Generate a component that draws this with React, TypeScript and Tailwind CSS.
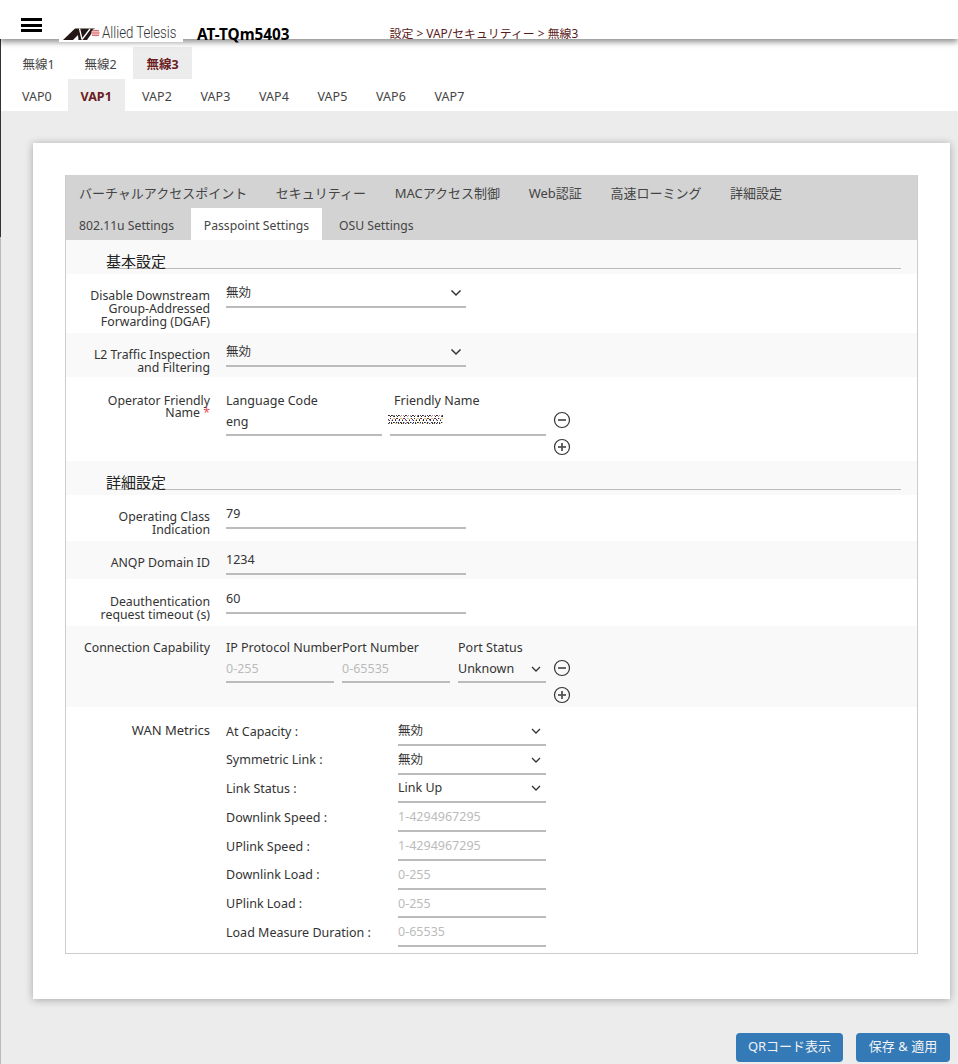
import { ReactNode } from "react";

const font = "font-['Noto_Sans','Noto_Sans_CJK_JP',sans-serif]";

const mainTabs = ["バーチャルアクセスポイント", "セキュリティー", "MACアクセス制御", "Web認証", "高速ローミング", "詳細設定"];

const wanRows = [
  { label: "At Capacity :", value: "無効", select: true },
  { label: "Symmetric Link :", value: "無効", select: true },
  { label: "Link Status :", value: "Link Up", select: true },
  { label: "Downlink Speed :", hint: "1-4294967295" },
  { label: "UPlink Speed :", hint: "1-4294967295" },
  { label: "Downlink Load :", hint: "0-255" },
  { label: "UPlink Load :", hint: "0-255" },
  { label: "Load Measure Duration :", hint: "0-65535" },
];

// pixel noise standing in for the masked name
const noiseColors = ["#222222", "#7a2b4a", "#e2c76a", "#8cc8ee", "#555555", "#3b3b7a", "#c98a8a", "#222222"];
const noise = Array.from({ length: 220 }, (_, i) => ({
  x: (i * 23) % 55,
  y: 4 + ((i * i * 3 + i * 11) % 13),
  c: noiseColors[(i * 13 + (i % 7)) % noiseColors.length],
}));

function Chevron({ small }: { small?: boolean }) {
  return (
    <svg width="12" height="8" viewBox="0 0 12 8" fill="none" className="mr-[4px] shrink-0">
      <path
        d={small ? "M2 2l4 4 4-4" : "M1.5 1.5L6 6l4.5-4.5"}
        stroke="#333333"
        strokeWidth={small ? 1.3 : 1.5}
      />
    </svg>
  );
}

function Field({ value, hint, select, small, className }: { value?: string; hint?: string; select?: boolean; small?: boolean; className: string }) {
  return (
    <div className={`flex h-[28px] shrink-0 items-center justify-between border-b-2 border-[#bbbbbb] ${className}`}>
      {hint ? <span className="pt-[2px] text-[#bbbbbb]">{hint}</span> : <span className="text-[#333333]">{value}</span>}
      {select && <Chevron small={small} />}
    </div>
  );
}

function RoundIcon({ plus }: { plus?: boolean }) {
  return (
    <svg width="18" height="18" viewBox="0 0 18 18" fill="none">
      <circle cx="9" cy="9" r="7.5" stroke="#333333" strokeWidth="1.2" />
      <path d="M5 9h8" stroke="#555555" strokeWidth="1.8" />
      {plus && <path d="M9 5v8" stroke="#555555" strokeWidth="1.8" />}
    </svg>
  );
}

function AddRemove() {
  return (
    <div className="ml-[7px] flex flex-col gap-[9px]">
      <RoundIcon />
      <RoundIcon plus />
    </div>
  );
}

function Row({ label, labelClass, shade, height, children }: { label: ReactNode; labelClass?: string; shade?: boolean; height: string; children: ReactNode }) {
  return (
    <div className={`flex ${height} ${shade ? "bg-[#f9f9f9]" : "bg-white"}`}>
      <div className={`w-[144px] shrink-0 text-right text-[12.3px] text-[#333333] ${labelClass ?? "pt-[15px] leading-[13px]"}`}>{label}</div>
      <div className="ml-[16px] flex min-w-0 flex-1 items-start pt-[6px]">{children}</div>
    </div>
  );
}

function Section({ title }: { title: string }) {
  return (
    <div className="h-[34px] bg-[#f9f9f9] pt-[13px] pr-[16px] pl-[41px]">
      <div className="h-[16px] border-b border-[#bbbbbb] text-[15px] leading-[16px] text-[#222222]">
        <span className="-ml-px">{title}</span>
      </div>
    </div>
  );
}

function Logo() {
  return (
    <div className="-mb-[3px] ml-[17px] flex h-[17px] w-[124px] items-start gap-[2px] bg-white pl-[4px]">
      <svg width="37" height="12" viewBox="0 0 37 12" className="mt-[3px] shrink-0">
        <path d="M0 12L12 0.5h20L24 12H0z" fill="#231815" />
        <path d="M10 12l5-5 .5 5H10z" fill="#ffffff" />
        <path d="M16.5 0.5L19 11.5M19 11.5L27 1" stroke="#ffffff" strokeWidth="1.3" fill="none" />
        <circle cx="32.5" cy="5" r="4.2" fill="#f3f3f3" />
        <path d="M29 2.8h7M28.5 5h8M29 7.2h7" stroke="#d6383f" strokeWidth="1" />
      </svg>
      <span className="origin-left scale-x-[0.8] font-['Roboto',sans-serif] text-[16.5px] leading-[16px] font-light whitespace-nowrap text-[#333333]">
        Allied Telesis
      </span>
    </div>
  );
}

export default function App() {
  return (
    <div className={`relative h-[1064px] w-[958px] overflow-hidden bg-[#ececec] text-[12.5px] ${font}`}>
      <div className="absolute top-0 left-0 h-[237px] w-px bg-[#333333]" />
      <div className="absolute top-[237px] left-0 h-[827px] w-px bg-[#bbbbbb]" />

      <header className="relative z-10 flex h-[39px] items-end bg-white shadow-[0_3px_6px_rgba(0,0,0,0.45)]">
        <div className="mb-[7px] ml-[21px] flex w-[21px] flex-col gap-[2.5px]">
          <div className="h-[3px] bg-black" />
          <div className="h-[3px] bg-black" />
          <div className="h-[3px] bg-black" />
        </div>
        <Logo />
        <div className="ml-[14px] -mb-[5px] text-[15.3px] leading-[20px] font-bold text-black">AT-TQm5403</div>
        <div className="ml-[100px] -mb-px text-[11.9px] leading-[14px] text-[#5a1a20]">設定 &gt; VAP/セキュリティー &gt; 無線3</div>
      </header>

      <div className="bg-white pt-[8px]">
        <div className="ml-[9px] flex h-[32px] gap-[3px]">
          {["無線1", "無線2", "無線3"].map((t, i) => (
            <div key={t} className={`flex w-[59px] items-center justify-center pt-[4px] ${i === 2 ? "bg-[#ececec] font-bold text-[#6b1c23]" : "text-[#444444]"}`}>
              {t}
            </div>
          ))}
        </div>
        <div className="flex h-[32px] items-stretch">
          <div className="flex items-center pt-[4px] pr-[16px] pl-[22px] text-[#444444]">VAP0</div>
          <div className="flex w-[57px] items-center justify-center bg-[#ececec] pt-[4px] font-bold text-[#6b1c23]">VAP1</div>
          <div className="ml-[3px] flex">
            {["VAP2", "VAP3", "VAP4", "VAP5", "VAP6", "VAP7"].map((t) => (
              <div key={t} className="flex w-[58.5px] items-center justify-center pt-[4px] text-[#444444]">
                {t}
              </div>
            ))}
          </div>
        </div>
      </div>

      <div className="mt-[32px] mr-[8px] ml-[33px] bg-white px-[32px] pt-[32px] pb-[45px] shadow-[0_1px_8px_rgba(0,0,0,0.3)]">
        <div className="border-r border-b border-l border-[#cccccc]">
          <div className="bg-[#d3d3d3] text-[13px] text-[#444444]">
            <div className="flex h-[33px]">
              {mainTabs.map((t) => (
                <div key={t} className="flex items-center px-[13px] pt-[4px] not-first:ml-[2.6px]">
                  {t}
                </div>
              ))}
            </div>
            <div className="ml-px flex h-[32px] text-[12.2px]">
              <div className="flex w-[124px] items-center pt-[4px] pl-[12px]">802.11u Settings</div>
              <div className="flex w-[131px] items-center justify-center bg-white pt-[4px]">Passpoint Settings</div>
              <div className="flex items-center pt-[4px] pl-[17px]">OSU Settings</div>
            </div>
          </div>

          <Section title="基本設定" />
          <Row height="h-[59px]" label={<>Disable Downstream<br />Group-Addressed<br />Forwarding (DGAF)</>}>
            <Field value="無効" select className="w-[240px]" />
          </Row>
          <Row height="h-[44px]" shade label={<>L2 Traffic Inspection<br />and Filtering</>}>
            <Field value="無効" select className="w-[240px]" />
          </Row>
          <Row
            height="h-[84px]"
            labelClass="pt-[18px] leading-[12px]"
            label={
              <>
                Operator Friendly
                <br />
                Name <span className="text-[#e8505b]">*</span>
              </>
            }
          >
            <div className="-mt-[6px] flex pt-[16px]">
              <div className="w-[156px]">
                <div className="h-[15px] leading-[15px] text-[#333333]">Language Code</div>
                <Field value="eng" className="w-full pt-[2px]" />
              </div>
              <div className="ml-[8px] w-[156px]">
                <div className="h-[15px] pl-[4px] leading-[15px] text-[#333333]">Friendly Name</div>
                <div className="relative">
                  <Field className="w-full" />
                  <svg width="56" height="20" viewBox="0 0 56 20" className="absolute top-[3px] -left-[2px]">
                    {noise.map((d, i) => (
                      <rect key={i} x={d.x} y={d.y} width="1" height="1" fill={d.c} />
                    ))}
                  </svg>
                </div>
              </div>
            </div>
            <div className="mt-[28px]">
              <AddRemove />
            </div>
          </Row>

          <Section title="詳細設定" />
          <Row height="h-[46px]" label={<>Operating Class<br />Indication</>}>
            <Field value="79" className="w-[240px]" />
          </Row>
          <Row height="h-[38px]" shade label="ANQP Domain ID">
            <Field value="1234" className="w-[240px]" />
          </Row>
          <Row height="h-[47px] pt-px" label={<>Deauthentication<br />request timeout (s)</>}>
            <Field value="60" className="w-[240px]" />
          </Row>
          <Row height="h-[81px]" shade label="Connection Capability">
            <div className="-mt-[6px] flex pt-[14px] whitespace-nowrap">
              <div className="w-[108px]">
                <div className="h-[15px] leading-[15px] text-[#333333]">IP Protocol Number</div>
                <Field hint="0-255" className="w-full" />
              </div>
              <div className="ml-[8px] w-[108px]">
                <div className="h-[15px] leading-[15px] text-[#333333]">Port Number</div>
                <Field hint="0-65535" className="w-full" />
              </div>
              <div className="ml-[8px] w-[88px]">
                <div className="h-[15px] leading-[15px] text-[#333333]">Port Status</div>
                <Field value="Unknown" select small className="w-full pt-[2px]" />
              </div>
            </div>
            <div className="mt-[27px]">
              <AddRemove />
            </div>
          </Row>
          <div className="flex h-[246px] bg-white">
            <div className="w-[144px] shrink-0 pt-[17px] text-right text-[13px] leading-[13px] text-[#333333]">WAN Metrics</div>
            <div className="ml-[16px] flex flex-col pt-[10px]">
              {wanRows.map((r) => (
                <div key={r.label} className="flex h-[28.75px] items-end">
                  <div className="flex h-full w-[172px] items-center pt-px text-[#333333]">{r.label}</div>
                  <Field value={r.value} hint={r.hint} select={r.select} small className={r.value === "無効" ? "h-full w-[148px] pt-[2px]" : "h-full w-[148px]"} />
                </div>
              ))}
            </div>
          </div>
        </div>
      </div>

      <div className="mt-[34px] mr-[8px] flex justify-end gap-[13px] text-[13px] text-[#f2f2f2]">
        <button className="h-[29px] w-[107px] rounded bg-[#337ab7] pb-[2px]">QRコード表示</button>
        <button className="h-[29px] w-[94px] rounded bg-[#337ab7] pb-[2px]">保存 &amp; 適用</button>
      </div>
    </div>
  );
}
